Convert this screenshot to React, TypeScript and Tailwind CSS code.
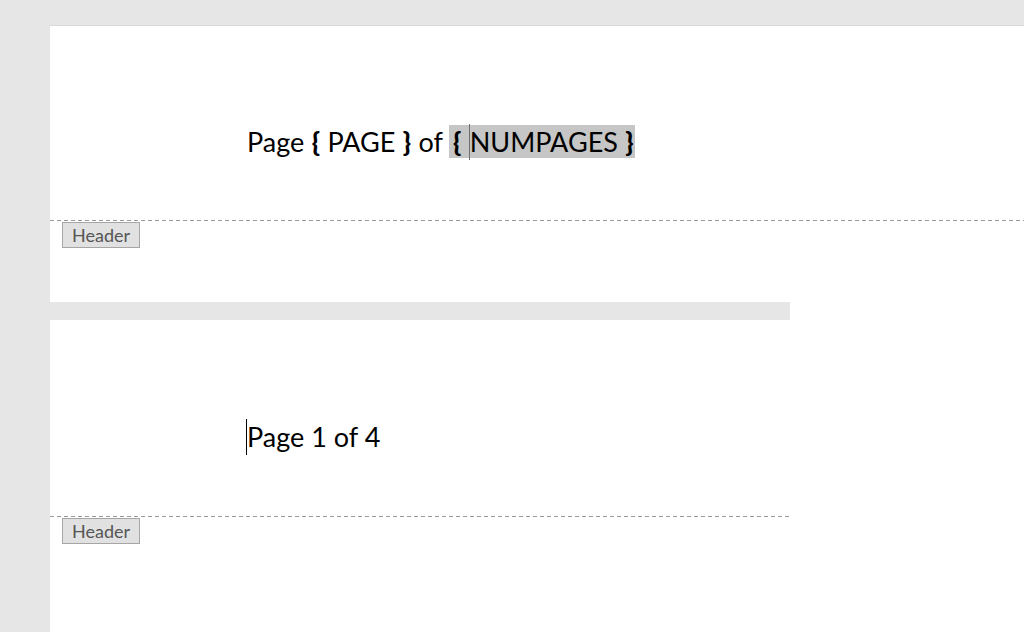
import React from 'react';

const dashed =
  'h-px bg-[linear-gradient(to_right,#9a9a9a_4px,transparent_4px)] bg-[length:7px_1px] bg-repeat-x';

function HeaderTag() {
  return (
    <div className="ml-[12px] mt-[1px] flex h-[26px] w-[78px] items-center justify-center border border-[#a6a6a6] bg-[#e1e1e1] font-['Lato'] text-[18px] text-[#555]">
      Header
    </div>
  );
}

function Cursor({ color }: { color: string }) {
  return <span className={`inline-block h-[36px] w-px align-top ${color}`} />;
}

function Brace({ ch }: { ch: string }) {
  return <b className="px-[0.5px] font-black">{ch}</b>;
}

export default function App() {
  return (
    <div className="flex h-[632px] w-[1024px] flex-col overflow-hidden bg-[#e6e6e6] font-['Lato',sans-serif]">
      {/* Page 1: field codes shown */}
      <div className="ml-[50px] mt-[25px] flex h-[277px] flex-col border-t border-[#d8d8d8] bg-white">
        <p className="pl-[197px] pt-[98px] text-[27px] leading-[36px] text-black">
          Page <Brace ch="{" /> PAGE <Brace ch="}" /> of{' '}
          <span className="bg-[#c6c6c6] pl-[3px] pr-[1px]">
            <Brace ch="{" /> <Cursor color="bg-[#6e6e6e]" />
            NUMPAGES <Brace ch="}" />
          </span>
        </p>
        <div className={`mt-[60px] ${dashed}`} />
        <HeaderTag />
      </div>

      {/* gap between pages */}
      <div className="flex h-[18px] pl-[50px]">
        <div className="w-[740px] bg-[#e6e6e6]" />
        <div className="flex-1 bg-white" />
      </div>

      {/* Page 2: field results */}
      <div className="flex flex-1 bg-white">
        <div className="w-[50px] bg-[#e6e6e6]" />
        <div className="flex flex-1 flex-col">
          <p className="pl-[196px] pt-[99px] text-[27px] leading-[36px] text-black">
            <Cursor color="bg-black" />
            Page 1 of 4
          </p>
          <div className={`mt-[61px] w-[740px] ${dashed}`} />
          <HeaderTag />
        </div>
      </div>
    </div>
  );
}
